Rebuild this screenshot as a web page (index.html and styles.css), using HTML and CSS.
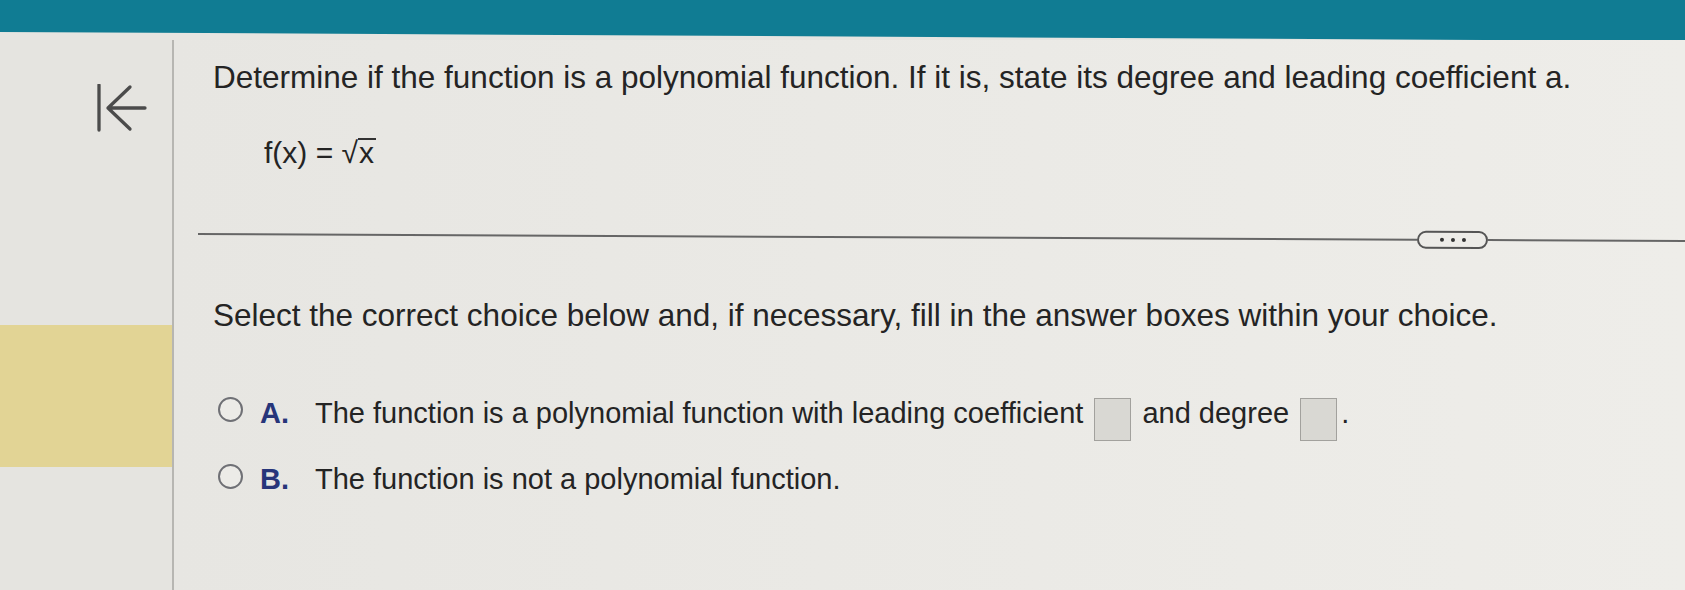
FILE: index.html
```html
<!DOCTYPE html>
<html>
<head>
<meta charset="utf-8">
<link rel="stylesheet" href="styles.css">
</head>
<body>
<div class="topbar"></div>
<div class="layout">
  <aside class="sidebar">
    <svg class="back" width="52" height="48" viewBox="0 0 52 48">
      <path d="M3 1 V46" stroke="#4b4b4b" stroke-width="3.3" fill="none" stroke-linecap="round"/>
      <path d="M34 3 L12 24 L34 45 M12 24 H49" stroke="#4b4b4b" stroke-width="3.3" fill="none" stroke-linecap="round" stroke-linejoin="round"/>
    </svg>
    <div class="band"></div>
  </aside>
  <main class="main">
    <p class="question">Determine if the function is a polynomial function. If it is, state its degree and leading coefficient a.</p>
    <p class="formula">f(x) = <span class="root">√<span class="radicand">x</span></span></p>
    <div class="divider">
      <span class="line"></span>
      <span class="more"><i></i><i></i><i></i></span>
      <span class="line short"></span>
    </div>
    <p class="instruct">Select the correct choice below and, if necessary, fill in the answer boxes within your choice.</p>
    <div class="choice choice-a">
      <span class="radio"></span>
      <span class="letter">A.</span>
      <span class="text"><span>The function is a polynomial function with leading coefficient</span><span class="box"></span><span>and degree</span><span class="box"></span><span class="dot">.</span></span>
    </div>
    <div class="choice choice-b">
      <span class="radio"></span>
      <span class="letter">B.</span>
      <span class="text">The function is not a polynomial function.</span>
    </div>
  </main>
</div>
</body>
</html>
```
FILE: styles.css
```css
html, body {
  margin: 0;
  padding: 0;
}
body {
  width: 1685px;
  height: 590px;
  overflow: hidden;
  background: #e6e5e1;
  font-family: "Liberation Sans", Arial, sans-serif;
  color: #242424;
}
.topbar {
  height: 40px;
  background: #107c93;
  clip-path: polygon(0 0, 100% 0, 100% 41px, 0 32px);
}
.layout {
  display: flex;
  height: 550px;
}
.sidebar {
  width: 172px;
  flex: none;
  border-right: 2px solid #b7b6b2;
  background: #e5e4e0;
  display: flex;
  flex-direction: column;
}
.back {
  display: block;
  margin: 44px 0 0 96px;
}
.band {
  margin-top: 193px;
  height: 142px;
  background: #e2d495;
}
.main {
  flex: 1;
  padding: 19px 0 0 39px;
  background: linear-gradient(90deg, #e7e6e2, #eeede9);
}
.question {
  margin: 0;
  font-size: 31.5px;
  line-height: 36px;
}
.formula {
  margin: 40px 0 0 51px;
  font-size: 30px;
  line-height: 36px;
}
.root {
  display: inline-block;
}
.radicand {
  display: inline-block;
  border-top: 2px solid #333;
  line-height: 26px;
  padding: 0 2px 0 1px;
}
.divider {
  margin: 54px 0 0 -15px;
  display: flex;
  align-items: center;
  height: 18px;
  transform-origin: left center;
  transform: rotate(0.27deg);
}
.line {
  flex: 1;
  height: 2px;
  background: #666;
}
.line.short {
  flex: none;
  width: 197px;
}
.more {
  box-sizing: border-box;
  width: 71px;
  height: 18px;
  border: 2px solid #555;
  border-radius: 9px;
  display: flex;
  align-items: center;
  justify-content: center;
  gap: 7px;
}
.more i {
  width: 4px;
  height: 4px;
  border-radius: 50%;
  background: #333;
}
.instruct {
  margin: 54px 0 0;
  font-size: 31.5px;
  line-height: 36px;
}
.choice {
  display: flex;
  align-items: center;
  height: 44px;
  font-size: 29px;
  line-height: 44px;
}
.choice-a {
  margin-top: 58px;
}
.choice-b {
  margin-top: 22px;
}
.radio {
  box-sizing: border-box;
  width: 25px;
  height: 25px;
  border: 2px solid #6f7075;
  border-radius: 50%;
  margin-left: 5px;
  margin-bottom: 8px;
  background: #ecebe7;
}
.choice-b .radio {
  margin-bottom: 6px;
}
.letter {
  width: 55px;
  margin-left: 17px;
  font-weight: bold;
  color: #27357a;
}
.text {
  display: inline-flex;
  align-items: center;
  height: 44px;
}
.box {
  box-sizing: border-box;
  width: 37px;
  height: 43px;
  border: 1.5px solid #a2a19d;
  background: #d9d8d3;
  margin: 6px 11px -6px;
}
.dot {
  margin-left: -7px;
}
```
